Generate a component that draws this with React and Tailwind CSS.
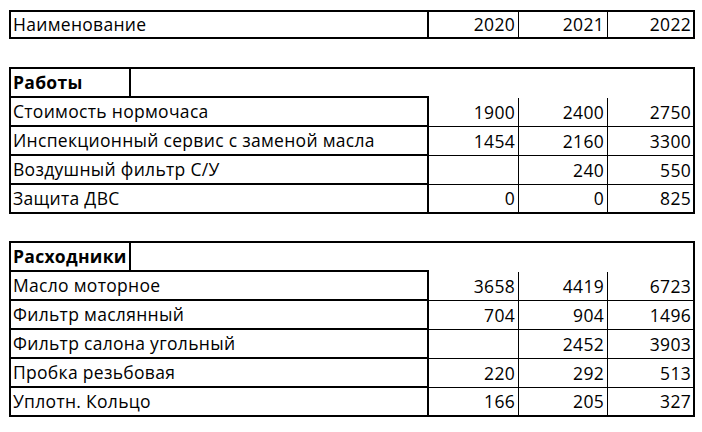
const works = [
  { name: "Стоимость нормочаса", v: ["1900", "2400", "2750"] },
  { name: "Инспекционный сервис с заменой масла", v: ["1454", "2160", "3300"] },
  { name: "Воздушный фильтр С/У", v: ["", "240", "550"] },
  { name: "Защита ДВС", v: ["0", "0", "825"] },
]

const supplies = [
  { name: "Масло моторное", v: ["3658", "4419", "6723"] },
  { name: "Фильтр маслянный", v: ["704", "904", "1496"] },
  { name: "Фильтр салона угольный", v: ["", "2452", "3903"] },
  { name: "Пробка резьбовая", v: ["220", "292", "513"] },
  { name: "Уплотн. Кольцо", v: ["166", "205", "327"] },
]

function Row({ name, v, last }) {
  const thin = last ? "" : "border-b"
  return (
    <div className={`flex ${last ? "h-[27px]" : "h-[29px]"}`}>
      <div className={`w-[418px] border-r-2 border-black flex items-end pb-[3px] pl-[2px] ${last ? "" : "border-b-2"}`}>
        {name}
      </div>
      <div className={`w-[90px] border-r border-black flex items-end justify-end pb-[3px] pr-[3px] ${thin}`}>{v[0]}</div>
      <div className={`w-[89px] border-r border-black flex items-end justify-end pb-[3px] pr-[3px] ${thin}`}>{v[1]}</div>
      <div className={`flex-1 border-black flex items-end justify-end pb-[3px] pr-[2px] ${thin}`}>{v[2]}</div>
    </div>
  )
}

function Section({ title, rows, className }) {
  return (
    <div className={`w-[686px] border-2 border-black ${className}`}>
      <div className="flex h-[29px]">
        <div className="w-[120px] border-r-2 border-b-2 border-black flex items-end pb-[3px] pl-[2px] font-bold">
          {title}
        </div>
        <div className="w-[298px] border-b-2 border-black"></div>
        <div className="flex-1"></div>
      </div>
      {rows.map((r, i) => (
        <Row key={r.name} name={r.name} v={r.v} last={i === rows.length - 1} />
      ))}
    </div>
  )
}

export default function App() {
  return (
    <div
      className="w-[702px] h-[432px] bg-white text-black text-[17.5px] leading-[22px] tracking-[0.3px] pl-[9px] pt-[10px] flex flex-col"
      style={{ fontFamily: '"Open Sans", "Noto Sans", sans-serif' }}
    >
      <div className="w-[686px] h-[29px] border-2 border-black flex">
        <div className="w-[418px] border-r-2 border-black flex items-end pb-[2px] pl-[2px]">Наименование</div>
        <div className="w-[90px] border-r border-black flex items-end justify-end pb-[2px] pr-[3px]">2020</div>
        <div className="w-[89px] border-r border-black flex items-end justify-end pb-[2px] pr-[3px]">2021</div>
        <div className="flex-1 flex items-end justify-end pb-[2px] pr-[2px]">2022</div>
      </div>
      <Section title="Работы" rows={works} className="mt-[28px]" />
      <Section title="Расходники" rows={supplies} className="mt-[27px]" />
    </div>
  )
}
